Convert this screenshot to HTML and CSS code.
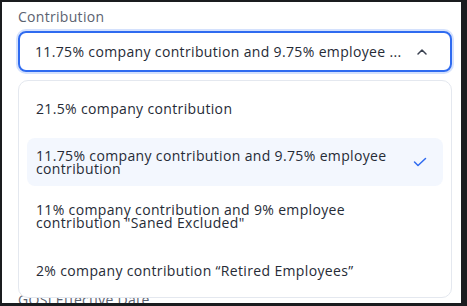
FILE: index.html
```html
<!DOCTYPE html>
<html lang="en">
<head>
    <meta charset="UTF-8">
    <title>Contribution</title>
    <link rel="stylesheet" href="styles.css">
</head>
<body>
    <div class="panel">
        <div class="field">
            <p class="label">Contribution</p>
            <div class="select">
                <span class="select-text">11.75% company contribution and 9.75% employee ...</span>
                <svg class="chevron" width="12" height="8" viewBox="0 0 12 8">
                    <path d="M2 6 L6 2 L10 6" fill="none" stroke="#3a4150" stroke-width="1.5" stroke-linecap="round" stroke-linejoin="round"/>
                </svg>
            </div>
            <div class="menu">
                <div class="option"><span>21.5% company contribution</span></div>
                <div class="option selected">
                    <span>11.75% company contribution and 9.75% employee contribution</span>
                    <svg class="check" width="14" height="10" viewBox="0 0 14 10">
                        <path d="M1.5 5 L5 8.5 L12.5 1.5" fill="none" stroke="#2f6bf0" stroke-width="1.5" stroke-linecap="round" stroke-linejoin="round"/>
                    </svg>
                </div>
                <div class="option"><span>11% company contribution and 9% employee contribution "Saned Excluded"</span></div>
                <div class="option"><span>2% company contribution “Retired Employees”</span></div>
            </div>
        </div>
        <div class="field">
            <p class="label">GOSI Effective Date</p>
        </div>
    </div>
</body>
</html>
```

FILE: styles.css
```css
* {
    margin: 0;
    padding: 0;
    box-sizing: border-box;
}
body {
    background: #1a1c1f;
    font-family: 'Open Sans', sans-serif;
    overflow: hidden;
}
.panel {
    background: #fff;
    width: 459px;
    height: 301px;
    margin: 2px 0 0 2px;
    padding: 8px 9px 0 16px;
    overflow: hidden;
}
.field {
    position: relative;
}
.label {
    font-size: 14px;
    color: #5b6270;
    line-height: 14px;
    height: 21px;
    letter-spacing: 0.3px;
}
.select {
    height: 41px;
    border: 2px solid #2f6bf0;
    border-radius: 8px;
    box-shadow: 0 0 0 2px #d4e1fd;
    display: flex;
    align-items: center;
    justify-content: space-between;
    padding: 0 22px 0 15px;
    margin-bottom: 221px;
}
.select-text {
    font-size: 14px;
    color: #262b36;
    letter-spacing: 0.35px;
}
.menu {
    position: absolute;
    left: 0;
    top: 70px;
    width: 434px;
    height: 218px;
    background: #fff;
    border: 1px solid #e4e8ef;
    border-radius: 10px;
    padding: 3px 8px;
    display: flex;
    flex-direction: column;
    gap: 6px;
    z-index: 2;
}
.option {
    height: 48px;
    flex-shrink: 0;
    border-radius: 8px;
    padding: 0 16px 0 9px;
    display: flex;
    align-items: center;
    justify-content: space-between;
    font-size: 14px;
    line-height: 13px;
    color: #262b36;
    letter-spacing: 0.35px;
}
.option span {
    max-width: 365px;
}
.selected {
    background: #f3f7fe;
}
.check {
    flex-shrink: 0;
}
```
